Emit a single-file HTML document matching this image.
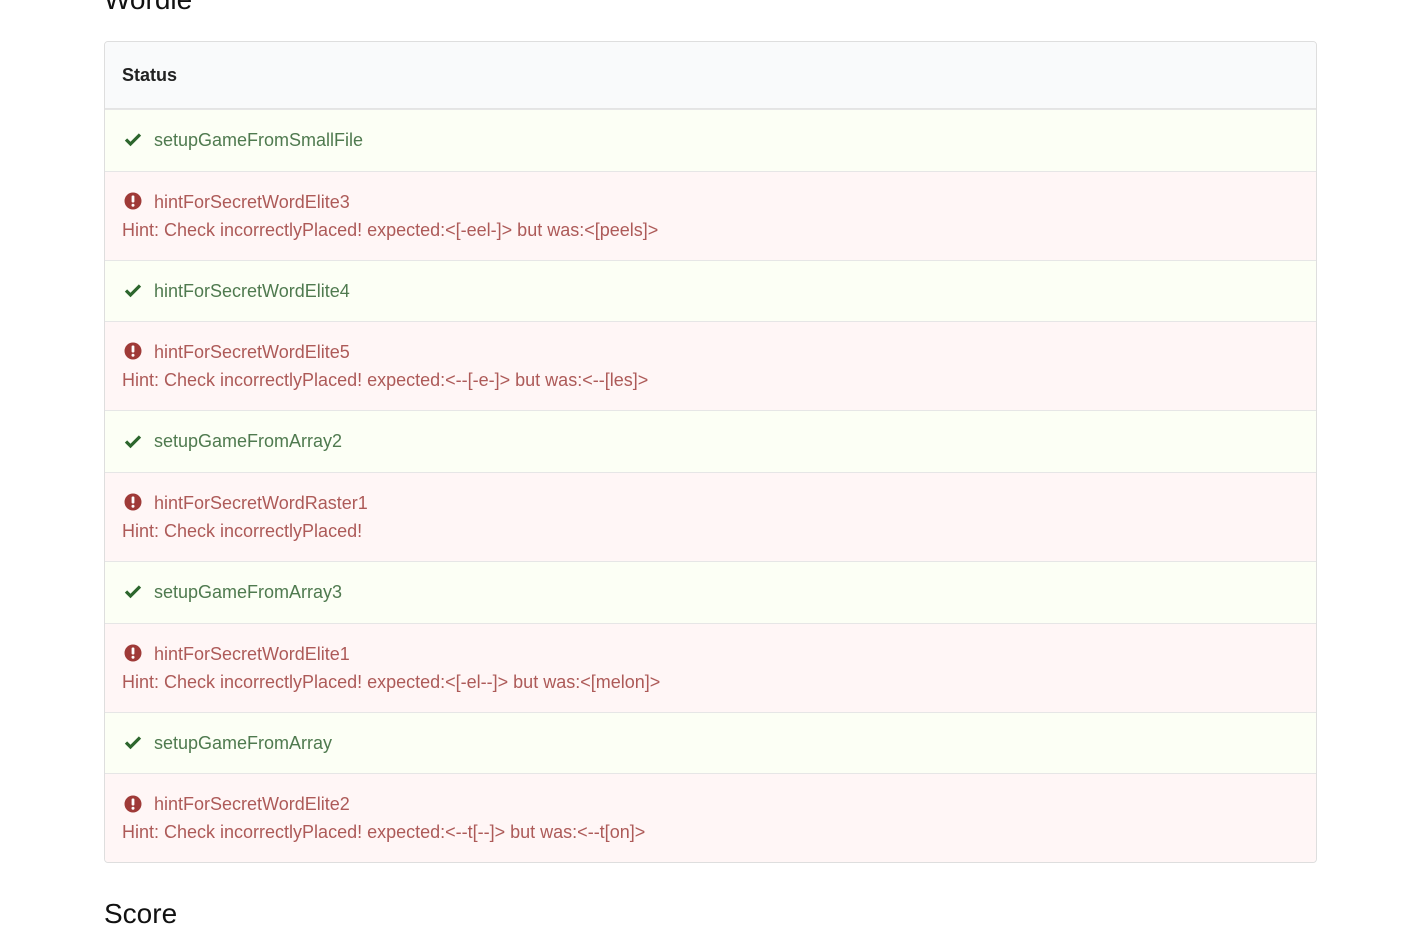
<!DOCTYPE html>
<html><head><style>
body{margin:0;background:#fff;font-family:"Liberation Sans",sans-serif;width:1427px;height:930px;overflow:hidden;position:relative}
h2{position:absolute;left:104px;margin:0;font-size:28px;font-weight:normal;color:#111;line-height:1}
.card{position:absolute;left:104px;top:41px;width:1211px;border:1px solid #dedede;border-radius:4px;overflow:hidden}
.hd{height:66px;background:#f9fafb;border-bottom:1px solid #e4e4e4;font-size:18px;font-weight:bold;color:#222;line-height:66px;padding-left:17px}
.r{border-top:1px solid #e6e6e6;padding:0 17px;font-size:18px;box-sizing:border-box}
.r:first-of-type{border-top:none}
.ok{height:61.5px;background:#fcfff5;color:#4f7a4f;line-height:61px}
.er{height:89.2px;background:#fff6f6;color:#ad5a58;padding-top:16px;line-height:28px}
.ic{display:inline-block;width:18px;height:18px;vertical-align:middle;margin:0 12px 0 2px;position:relative;top:-2px}
</style></head><body>
<h2 style="top:-14px">Wordle</h2>
<div class="card">
<div class="hd">Status</div>
<div class="r ok"><svg class="ic" viewBox="0 0 18 18"><path d="M2 9.5l4.5 4.5L16 4.5" stroke="#2c662d" stroke-width="3.2" fill="none"/></svg>setupGameFromSmallFile</div>
<div class="r er"><svg class="ic" viewBox="0 0 18 18"><circle cx="9" cy="9" r="8.5" fill="#9f3a38"/><rect x="7.6" y="3.5" width="2.8" height="7" rx="1" fill="#fff"/><circle cx="9" cy="13.3" r="1.5" fill="#fff"/></svg>hintForSecretWordElite3<br>Hint: Check incorrectlyPlaced! expected:&lt;[-eel-]&gt; but was:&lt;[peels]&gt;</div>
<div class="r ok"><svg class="ic" viewBox="0 0 18 18"><path d="M2 9.5l4.5 4.5L16 4.5" stroke="#2c662d" stroke-width="3.2" fill="none"/></svg>hintForSecretWordElite4</div>
<div class="r er"><svg class="ic" viewBox="0 0 18 18"><circle cx="9" cy="9" r="8.5" fill="#9f3a38"/><rect x="7.6" y="3.5" width="2.8" height="7" rx="1" fill="#fff"/><circle cx="9" cy="13.3" r="1.5" fill="#fff"/></svg>hintForSecretWordElite5<br>Hint: Check incorrectlyPlaced! expected:&lt;--[-e-]&gt; but was:&lt;--[les]&gt;</div>
<div class="r ok"><svg class="ic" viewBox="0 0 18 18"><path d="M2 9.5l4.5 4.5L16 4.5" stroke="#2c662d" stroke-width="3.2" fill="none"/></svg>setupGameFromArray2</div>
<div class="r er"><svg class="ic" viewBox="0 0 18 18"><circle cx="9" cy="9" r="8.5" fill="#9f3a38"/><rect x="7.6" y="3.5" width="2.8" height="7" rx="1" fill="#fff"/><circle cx="9" cy="13.3" r="1.5" fill="#fff"/></svg>hintForSecretWordRaster1<br>Hint: Check incorrectlyPlaced!</div>
<div class="r ok"><svg class="ic" viewBox="0 0 18 18"><path d="M2 9.5l4.5 4.5L16 4.5" stroke="#2c662d" stroke-width="3.2" fill="none"/></svg>setupGameFromArray3</div>
<div class="r er"><svg class="ic" viewBox="0 0 18 18"><circle cx="9" cy="9" r="8.5" fill="#9f3a38"/><rect x="7.6" y="3.5" width="2.8" height="7" rx="1" fill="#fff"/><circle cx="9" cy="13.3" r="1.5" fill="#fff"/></svg>hintForSecretWordElite1<br>Hint: Check incorrectlyPlaced! expected:&lt;[-el--]&gt; but was:&lt;[melon]&gt;</div>
<div class="r ok"><svg class="ic" viewBox="0 0 18 18"><path d="M2 9.5l4.5 4.5L16 4.5" stroke="#2c662d" stroke-width="3.2" fill="none"/></svg>setupGameFromArray</div>
<div class="r er"><svg class="ic" viewBox="0 0 18 18"><circle cx="9" cy="9" r="8.5" fill="#9f3a38"/><rect x="7.6" y="3.5" width="2.8" height="7" rx="1" fill="#fff"/><circle cx="9" cy="13.3" r="1.5" fill="#fff"/></svg>hintForSecretWordElite2<br>Hint: Check incorrectlyPlaced! expected:&lt;--t[--]&gt; but was:&lt;--t[on]&gt;</div>
</div>
<h2 style="top:900px">Score</h2>
</body></html>
